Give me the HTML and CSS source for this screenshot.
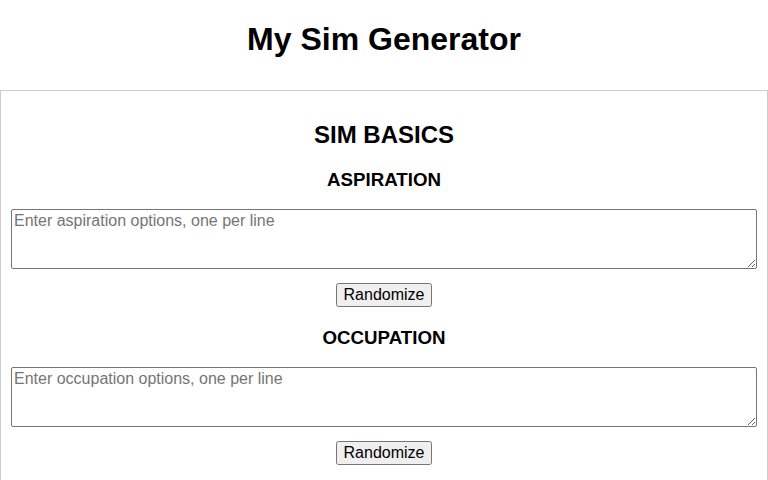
FILE: index.html
```html
<!DOCTYPE html>
<html>
<head>
<meta charset="utf-8">
<title>My Sim Generator</title>
<link rel="stylesheet" href="styles.css">
</head>
<body>
<header class="header">
  <h1 class="title">My Sim Generator</h1>
</header>
<main class="panel">
  <h2 class="panel-title">SIM BASICS</h2>
  <section class="field">
    <h3 class="field-title">ASPIRATION</h3>
    <textarea class="field-input" placeholder="Enter aspiration options, one per line"></textarea>
    <button class="field-button" type="button">Randomize</button>
  </section>
  <section class="field">
    <h3 class="field-title">OCCUPATION</h3>
    <textarea class="field-input" placeholder="Enter occupation options, one per line"></textarea>
    <button class="field-button" type="button">Randomize</button>
  </section>
</main>
</body>
</html>
```

FILE: styles.css
```css
html, body {
  margin: 0;
  padding: 0;
  background: #ffffff;
  color: #000000;
  font-family: "Liberation Sans", Arial, sans-serif;
}

.header {
  padding-bottom: 11px;
  text-align: center;
}

.title {
  margin: 0;
  padding: 21px 0 21px;
  font-size: 32px;
  font-weight: bold;
}

.panel {
  display: block;
  border: 1px solid #cccccc;
  padding: 10px 10px 20px;
  text-align: center;
}

.panel-title {
  margin: 20px 0 20px;
  font-size: 24px;
  font-weight: bold;
}

.field {
  display: flex;
  flex-direction: column;
  align-items: center;
}

.field-title {
  margin: 0 0 18px;
  font-size: 18.72px;
  font-weight: bold;
}

.field + .field .field-title {
  margin-top: 20px;
}

.field-input {
  box-sizing: border-box;
  width: 100%;
  height: 60px;
  margin: 0 0 14px;
  padding: 2px;
  font-family: "Liberation Sans", Arial, sans-serif;
  font-size: 16px;
  border: 1px solid #767676;
  border-radius: 2px;
  resize: vertical;
}

.field-input::placeholder {
  color: #757575;
}

.field-button {
  font-family: "Liberation Sans", Arial, sans-serif;
  font-size: 16px;
}
```
